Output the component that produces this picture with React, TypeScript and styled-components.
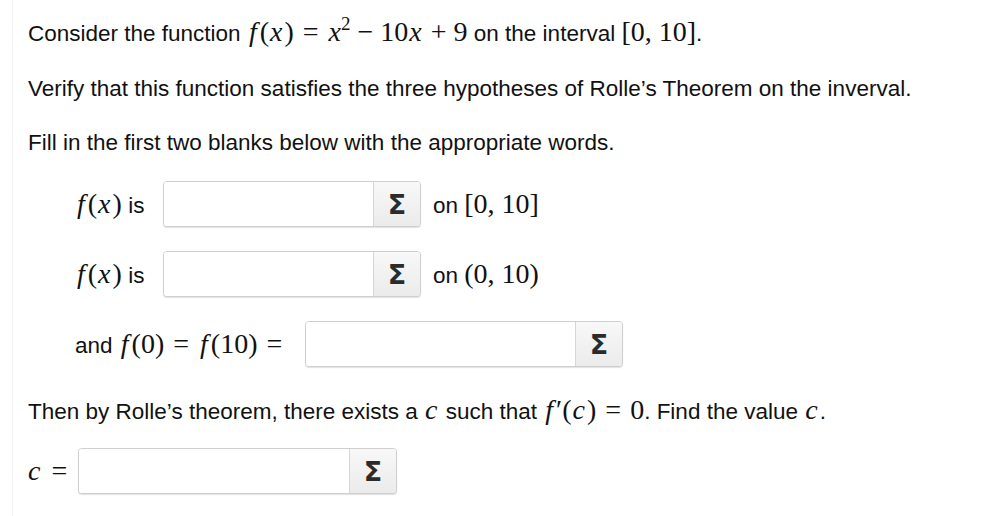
import React from "react";
import styled, { createGlobalStyle } from "styled-components";

const GlobalStyle = createGlobalStyle`
  html, body {
    margin: 0;
    padding: 0;
    background: #ffffff;
  }
  body {
    font-family: "Liberation Sans", Arial, Helvetica, sans-serif;
    color: #111;
  }
`;

const Page = styled.div`
  margin-left: 12px;
  border-left: 1px solid #f2f2f2;
  padding: 18px 0 0 15px;
  min-height: 498px;
`;

const Para = styled.p<{ $top?: number }>`
  margin: ${({ $top }) => $top ?? 0}px 0 0 0;
  font-size: 22.5px;
  line-height: 28px;
  height: 28px;
  white-space: nowrap;
`;

// math run, serif like MathJax output
const M = styled.span`
  font-family: "Liberation Serif", "Times New Roman", serif;
  font-size: 28px;
  line-height: 1;
`;

const I = styled.i<{ $l?: number; $r?: number }>`
  font-style: italic;
  padding-left: ${({ $l }) => $l ?? 1}px;
  padding-right: ${({ $r }) => $r ?? 2}px;
`;

const Op = styled.span<{ $rel?: boolean }>`
  display: inline-block;
  margin: 0 ${({ $rel }) => ($rel ? 9 : 7)}px;
`;

const Sup = styled.sup`
  font-size: 19px;
  line-height: 0;
  vertical-align: 0;
  position: relative;
  top: -11px;
`;

const Row = styled.div<{ $top: number; $indent?: boolean }>`
  display: flex;
  align-items: center;
  gap: 13px;
  margin-top: ${({ $top }) => $top}px;
  padding-left: ${({ $indent }) => ($indent ? 47 : 0)}px;
  font-size: 22.5px;
  white-space: nowrap;
`;

const Label = styled.span<{ $w: number }>`
  width: ${({ $w }) => $w}px;
  flex-shrink: 0;
`;

const AnswerBox = styled.div<{ $w: number }>`
  display: flex;
  width: ${({ $w }) => $w}px;
  height: 46px;
  box-sizing: border-box;
  border: 1px solid #cfcfcf;
  border-radius: 4px;
  box-shadow: 0 1px 1px rgba(0, 0, 0, 0.12);
  overflow: hidden;
  background: #fff;
  flex-shrink: 0;
`;

const Field = styled.div`
  flex: 1;
  background: #fff;
`;

const SigmaButton = styled.div`
  width: 46px;
  display: flex;
  align-items: center;
  justify-content: center;
  border-left: 1px solid #d6d6d6;
  background: linear-gradient(#f8f8f8, #ebebeb);
  font-family: "DejaVu Sans", "Liberation Sans", sans-serif;
  font-weight: bold;
  font-size: 27px;
  color: #2b2b2b;
`;

const After = styled.span`
  margin-left: -1px;
`;

const Answer = ({ w }: { w: number }) => (
  <AnswerBox $w={w}>
    <Field />
    <SigmaButton>Σ</SigmaButton>
  </AnswerBox>
);

const F = () => (
  <I $l={2} $r={3}>
    f
  </I>
);

const Fx = () => (
  <M>
    <F />(<I>x</I>)
  </M>
);

export default function App() {
  return (
    <>
      <GlobalStyle />
      <Page>
        <Para>
          Consider the function{" "}
          <M>
            <F />(<I>x</I>)<Op $rel>=</Op>
            <I $r={0}>x</I>
            <Sup>2</Sup>
            <Op>−</Op>10<I>x</I>
            <Op>+</Op>9
          </M>{" "}
          on the interval <M>[0, 10]</M>.
        </Para>
        <Para $top={29}>
          Verify that this function satisfies the three hypotheses of Rolle’s Theorem on the inverval.
        </Para>
        <Para $top={26}>Fill in the first two blanks below with the appropriate words.</Para>

        <Row $top={24} $indent>
          <Label $w={75}>
            <Fx /> is
          </Label>
          <Answer w={258} />
          <After>
            on <M>[0, 10]</M>
          </After>
        </Row>

        <Row $top={24} $indent>
          <Label $w={75}>
            <Fx /> is
          </Label>
          <Answer w={258} />
          <After>
            on <M>(0, 10)</M>
          </After>
        </Row>

        <Row $top={24} $indent>
          <Label $w={217}>
            and{" "}
            <M>
              <F />(0)<Op $rel>=</Op>
              <F />(10)<Op $rel>=</Op>
            </M>
          </Label>
          <Answer w={318} />
        </Row>

        <Para $top={29}>
          Then by Rolle’s theorem, there exists a{" "}
          <M>
            <I>c</I>
          </M>{" "}
          such that{" "}
          <M>
            <F />′(<I>c</I>)<Op $rel>=</Op>0
          </M>
          . Find the value{" "}
          <M>
            <I>c</I>
          </M>
          .
        </Para>

        <Row $top={24}>
          <Label $w={37}>
            <M>
              <I $l={0}>c</I>
              <Op $rel>=</Op>
            </M>
          </Label>
          <Answer w={319} />
        </Row>
      </Page>
    </>
  );
}
